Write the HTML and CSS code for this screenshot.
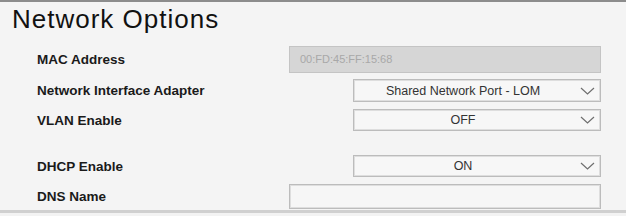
FILE: index.html
```html
<!DOCTYPE html>
<html lang="en">
<head>
  <meta charset="UTF-8">
  <meta name="viewport" content="width=device-width, initial-scale=1.0">
  <title>Network Options</title>
  <link rel="stylesheet" href="styles.css">
</head>
<body>
  <div class="panel">
    <h2>Network Options</h2>
    <div class="rows">
      <div class="row row-mac">
        <label>MAC Address</label>
        <div class="field readonly">00:FD:45:FF:15:68</div>
      </div>
      <div class="row row-nia">
        <label>Network Interface Adapter</label>
        <div class="select">
          <span>Shared Network Port - LOM</span>
          <svg width="15" height="8" viewBox="0 0 15 8"><polyline points="1,1 7.5,7 14,1" fill="none" stroke="#6f6f6f" stroke-width="1.2"/></svg>
        </div>
      </div>
      <div class="row row-vlan">
        <label>VLAN Enable</label>
        <div class="select">
          <span>OFF</span>
          <svg width="15" height="8" viewBox="0 0 15 8"><polyline points="1,1 7.5,7 14,1" fill="none" stroke="#6f6f6f" stroke-width="1.2"/></svg>
        </div>
      </div>
      <div class="row row-dhcp">
        <label>DHCP Enable</label>
        <div class="select">
          <span>ON</span>
          <svg width="15" height="8" viewBox="0 0 15 8"><polyline points="1,1 7.5,7 14,1" fill="none" stroke="#6f6f6f" stroke-width="1.2"/></svg>
        </div>
      </div>
      <div class="row row-dns">
        <label>DNS Name</label>
        <div class="field"></div>
      </div>
    </div>
  </div>
</body>
</html>
```

FILE: styles.css
```css
body {
  margin: 0;
  padding: 0;
  background: #f3f3f3;
  font-family: "Liberation Sans", Arial, sans-serif;
}
.panel {
  width: 626px;
  height: 213px;
  box-sizing: border-box;
  border-top: 2px solid #8c8c8c;
  border-bottom: 3px solid #d0d0d0;
  background: #f4f4f4;
}
h2 {
  margin: 0;
  padding: 2px 0 0 12px;
  font-size: 26px;
  line-height: 30px;
  font-weight: normal;
  letter-spacing: 1px;
  color: #111;
}
.rows {
  display: flex;
  flex-direction: column;
  padding: 12px 25px 0 37px;
}
.row {
  display: flex;
  align-items: center;
  justify-content: space-between;
}
.row label {
  font-size: 13.5px;
  font-weight: bold;
  color: #1a1a1a;
}
.row-mac { height: 27px; }
.row-nia { height: 23px; margin-top: 6px; }
.row-vlan { height: 22px; margin-top: 7px; }
.row-dhcp { height: 22px; margin-top: 24px; }
.row-dns { height: 25px; margin-top: 7px; }
.field {
  width: 312px;
  height: 100%;
  box-sizing: border-box;
  border: 1px solid #bcbcbc;
  box-shadow: inset 0 0 0 1px #dedede;
  background: #f6f6f6;
}
.field.readonly {
  background: #d6d6d6;
  border-color: #c4c4c4;
  box-shadow: none;
  color: #a8a8a8;
  font-size: 11px;
  line-height: 25px;
  padding-left: 10px;
}
.select {
  width: 248px;
  height: 100%;
  box-sizing: border-box;
  display: flex;
  align-items: center;
  border: 1px solid #bcbcbc;
  box-shadow: inset 0 0 0 1px #dedede;
  background: #f7f7f7;
}
.select span {
  flex: 1;
  text-align: center;
  padding-right: 8px;
  font-size: 12.5px;
  color: #333;
}
.select svg {
  margin-right: 5px;
}
```
